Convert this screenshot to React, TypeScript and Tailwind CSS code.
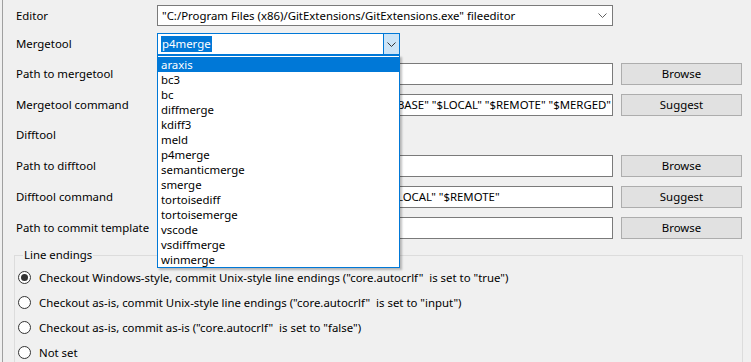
import { FC, ReactNode } from "react";

const TOOLS = [
  "araxis",
  "bc3",
  "bc",
  "diffmerge",
  "kdiff3",
  "meld",
  "p4merge",
  "semanticmerge",
  "smerge",
  "tortoisediff",
  "tortoisemerge",
  "vscode",
  "vsdiffmerge",
  "winmerge",
];

const LINE_ENDINGS = [
  'Checkout Windows-style, commit Unix-style line endings ("core.autocrlf"  is set to "true")',
  'Checkout as-is, commit Unix-style line endings ("core.autocrlf"  is set to "input")',
  'Checkout as-is, commit as-is ("core.autocrlf"  is set to "false")',
  "Not set",
];

const Chevron: FC<{ className?: string }> = ({ className }) => (
  <svg width="9" height="5" viewBox="0 0 9 5" className={className}>
    <polyline points="0.5,0.5 4.5,4.5 8.5,0.5" fill="none" stroke="currentColor" strokeWidth="1" />
  </svg>
);

const Row: FC<{ label: string; className?: string; children?: ReactNode }> = ({ label, className, children }) => (
  <div className={["flex items-center h-[22px]", className].join(" ")}>
    <div className="w-[141px] shrink-0 whitespace-nowrap">{label}</div>
    {children}
  </div>
);

const TextBox: FC<{ value?: string; alignEnd?: boolean }> = ({ value, alignEnd }) => (
  <div
    className={[
      "w-[456px] h-[22px] bg-white border border-[#7a7a7a] flex items-center overflow-hidden whitespace-nowrap px-[4px]",
      alignEnd ? "justify-end pr-[1px]" : "",
    ].join(" ")}
  >
    <span className="shrink-0">{value}</span>
  </div>
);

const Button: FC<{ label: string }> = ({ label }) => (
  <div className="ml-[8px] w-[121px] h-[22px] bg-[#e1e1e1] border border-[#adadad] flex items-center justify-center">
    {label}
  </div>
);

export default function App() {
  return (
    <div className="w-[751px] h-[362px] overflow-hidden bg-[#f0f0f0] pl-[2px] text-[11.4px] leading-[16px] text-black font-['Noto_Sans',sans-serif]">
      <div className="relative h-full border-l border-[#a0a0a0] pl-[13px] pt-[5px]">
        <Row label="Editor" className="!h-[21px]">
          <div className="w-[456px] h-[21px] bg-white border border-[#7a7a7a] flex items-center pl-[4px] pr-[5px]">
            <span className="flex-1 whitespace-nowrap">
              "C:/Program Files (x86)/GitExtensions/GitExtensions.exe" fileeditor
            </span>
            <Chevron className="text-[#606060]" />
          </div>
        </Row>

        <Row label="Mergetool" className="mt-[7px]">
          <div className="w-[243px] h-[22px] bg-white border border-[#0078d7] flex items-stretch">
            <div className="flex-1 flex items-center pl-[3px]">
              <span className="bg-[#0078d7] text-white px-[1px]">p4merge</span>
            </div>
            <div className="w-[16px] bg-[#cce4f7] border-l border-[#0078d7] flex items-center justify-center">
              <Chevron className="text-[#333333]" />
            </div>
          </div>
        </Row>

        <Row label="Path to mergetool" className="mt-[8px]">
          <TextBox />
          <Button label="Browse" />
        </Row>

        <Row label="Mergetool command" className="mt-[9px]">
          <TextBox value={'"C:/Program Files/Perforce/p4merge.exe" "$BASE" "$LOCAL" "$REMOTE" "$MERGED"'} alignEnd />
          <Button label="Suggest" />
        </Row>

        <Row label="Difftool" className="mt-[8px]">
          <div className="w-[243px] h-[22px] bg-white border border-[#7a7a7a]" />
        </Row>

        <Row label="Path to difftool" className="mt-[9px]">
          <TextBox />
          <Button label="Browse" />
        </Row>

        <Row label="Difftool command" className="mt-[9px]">
          <TextBox value={'"C:/Program Files/Perforce/p4merge.exe" "$LOCAL" "$REMOTE"'} />
          <Button label="Suggest" />
        </Row>

        <Row label="Path to commit template" className="mt-[9px]">
          <TextBox />
          <Button label="Browse" />
        </Row>

        {/* Line endings group */}
        <fieldset className="mt-[8px] -ml-[2px] w-[729px] border border-[#dcdcdc] pl-[2px] pt-[2px] h-[130px]">
          <legend className="ml-[6px] px-[1px]">Line endings</legend>
          {LINE_ENDINGS.map((text, i) => (
            <div key={text} className="flex items-center h-[25px]">
              <div className="w-[13px] h-[13px] ml-[1px] rounded-full border border-[#333333] bg-white flex items-center justify-center">
                {i === 0 && <div className="w-[7px] h-[7px] rounded-full bg-[#333333]" />}
              </div>
              <span className="ml-[8px] whitespace-pre">{text}</span>
            </div>
          ))}
        </fieldset>

        {/* Open dropdown list */}
        <div className="absolute left-[154px] top-[55px] w-[243px] bg-white border border-[#0078d7] pt-[1px] shadow-[2px_2px_2px_rgba(0,0,0,0.25)]">
          {TOOLS.map((tool, i) => (
            <div
              key={tool}
              className={[
                "h-[15px] leading-[15px] pl-[3px]",
                i === 0 ? "bg-[#0078d7] text-white" : "",
              ].join(" ")}
            >
              {tool}
            </div>
          ))}
        </div>
      </div>
    </div>
  );
}
